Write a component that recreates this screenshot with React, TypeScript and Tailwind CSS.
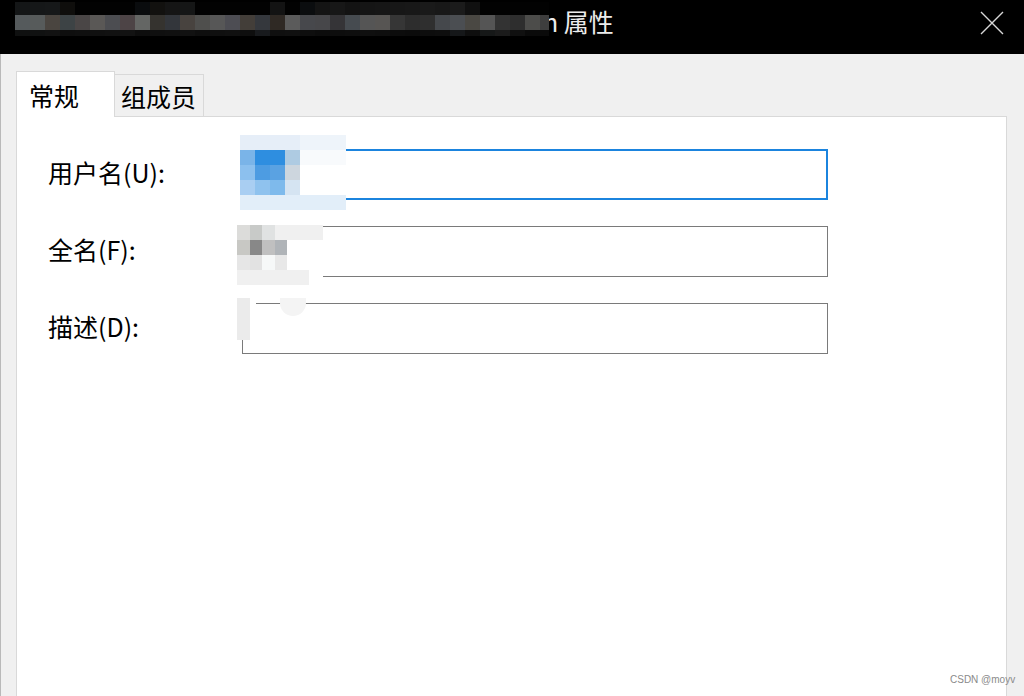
import React from "react";

const titleMid = [
  "#555a5c", "#575b5b", "#4a4540", "#3d4345", "#4a4646", "#5a5856", "#4c4d51", "#4d4446", "#646664", "#35332f",
  "#33363b", "#48433f", "#4f4f4d", "#575757", "#4d4d53", "#433e39", "#35383d", "#2f2924", "#5b5b5b", "#47484c",
  "#47474a", "#353437", "#464b50", "#555555", "#575553", "#363636", "#2d2d2d", "#2f2f2f", "#45484c", "#4b4e52",
  "#4a4843", "#555555", "#333333", "#2e2e2e", "#4c4c4a", "#3e3e3e",
];
const titleTop = [
  "#141617", "#151718", "#161819", "#0f0e0c", "#020202", "#020202", "#020202", "#020202", "#0a0c0e", "#12110f",
  "#151515", "#151616", "#020202", "#020202", "#020202", "#020202", "#020202", "#131313", "#020202", "#0b0d0f",
  "#141414", "#171717", "#131313", "#151515", "#161616", "#171717", "#181818", "#1a1a1a", "#181818", "#1b1b1b",
  "#101010", "#020202", "#020202", "#020202", "#020202", "#020202",
];
const titleBot = [
  "#0f1010", "#101111", "#121212", "#0e0e0e", "#0f0f0f", "#101010", "#111111", "#121212", "#0d0d0d", "#0f0f0f",
  "#101010", "#111111", "#0e0e0e", "#0f0f0f", "#101010", "#0e0e0e", "#181a1d", "#0f0f0f", "#101010", "#0e0e0e",
  "#0c0c0c", "#0d0d0d", "#0e0e0e", "#0f0f0f", "#0e0e0e", "#0c0c0c", "#0b0b0b", "#0d0d0d", "#0e0e0e", "#151719",
  "#0e0e0e", "#161818", "#1b1b1b", "#101010", "#0a0a0a", "#0a0a0a",
];
const titleW = [...Array(35).fill(15), 9];

function Row({ colors, w, h }: { colors: string[]; w: number[] | number; h: number }) {
  return (
    <div className="flex">
      {colors.map((c, i) => (
        <div
          key={i}
          style={{ backgroundColor: c, width: Array.isArray(w) ? w[i] : w, height: h }}
        />
      ))}
    </div>
  );
}

function Field({ focus }: { focus: boolean }) {
  if (focus) {
    return <div className="w-[586px] h-[51px] bg-white border-2 border-solid border-[#1b84de]" />;
  }
  return <div className="w-[586px] h-[51px] bg-white border border-solid border-[#7a7a7a]" />;
}

export default function App() {
  return (
    <div
      className="relative w-[1024px] h-[696px] overflow-hidden bg-[#f0f0f0] flex flex-col"
      style={{ fontFamily: '"Noto Sans CJK SC", "Microsoft YaHei", sans-serif' }}
    >
      {/* Title bar */}
      <header className="relative h-[54px] bg-black flex items-start shrink-0">
        <div className="ml-[15px] mt-[2px] flex flex-col z-10">
          <Row colors={titleTop} w={titleW} h={13} />
          <Row colors={titleMid} w={titleW} h={15} />
          <Row colors={titleBot} w={titleW} h={6} />
        </div>
        <span className="ml-[-6px] mt-[9px] text-[25px] leading-none text-[#ececec]">
          n 属性
        </span>
        <svg
          className="absolute left-[980px] top-[11px]"
          width="24"
          height="24"
          viewBox="0 0 24 24"
        >
          <path d="M1 1 L23 23 M23 1 L1 23" stroke="#d8d8d8" strokeWidth="1.4" fill="none" />
        </svg>
      </header>

      {/* Body */}
      <div className="flex-1 flex flex-col border-l border-[#b9b9b9] pl-[15px] pr-[17px] pt-[17px]">
        {/* Tabs */}
        <div className="relative z-10 flex items-end h-[46px] -mb-px">
          <div className="w-[99px] h-[46px] bg-white border border-b-0 border-[#d9d9d9] pl-[12px] flex items-center">
            <span className="text-[25px] leading-none text-black mt-[2px]">常规</span>
          </div>
          <div className="w-[89px] h-[42px] mb-px bg-[#f0f0f0] border-t border-r border-[#d9d9d9] pl-[6px] flex items-center">
            <span className="text-[25px] leading-none text-black mt-[2px]">组成员</span>
          </div>
        </div>

        {/* Panel */}
        <div className="flex-1 bg-white border border-b-0 border-[#d9d9d9] pt-[32px] pl-[31px] flex flex-col gap-[26px]">
          {[
            { label: "用户名(U):", focus: true },
            { label: "全名(F):", focus: false },
            { label: "描述(D):", focus: false },
          ].map((r) => (
            <div key={r.label} className="flex items-center h-[51px]">
              <div className="w-[194px] text-[25px] leading-none text-black mt-[-5px]">{r.label}</div>
              <Field focus={r.focus} />
            </div>
          ))}
        </div>
      </div>

      {/* Mosaic overlays on inputs */}
      <div className="absolute left-[240px] top-[135px] flex flex-col">
        <Row colors={["#e6eef8", "#e6eef8", "#e6eef8", "#e6eef8", "#eef4fa"]} w={[15, 15, 15, 15, 46]} h={15} />
        <Row colors={["#7ab4e8", "#2e8ee0", "#2e8ee0", "#aecbe2", "#f8fafc"]} w={[15, 15, 15, 15, 46]} h={15} />
        <Row colors={["#8cc0ee", "#4d9ce2", "#5aa2e2", "#cdd6de", "#ffffff"]} w={[15, 15, 15, 15, 46]} h={15} />
        <Row colors={["#a9cef2", "#8fc2ee", "#7ebaec", "#d5e4f2", "#ffffff"]} w={[15, 15, 15, 15, 46]} h={15} />
        <Row colors={["#e2eef9"]} w={[106]} h={15} />
      </div>
      <div className="absolute left-[237px] top-[225px] flex flex-col">
        <Row colors={["#dcdcda", "#c8cac8", "#e0e2e2", "#f0f0f0", "#f0f0f0"]} w={[13, 12, 13, 12, 36]} h={15} />
        <Row colors={["#c8c8c4", "#888888", "#c0c0c0", "#b0b4b8", "#ffffff"]} w={[13, 12, 13, 12, 36]} h={15} />
        <Row colors={["#e6e6e6", "#e2e2e2", "#f6f8f8", "#e8e8e8", "#ffffff"]} w={[13, 12, 13, 12, 36]} h={15} />
        <Row colors={["#f0f0f0", "#ffffff"]} w={[72, 14]} h={15} />
      </div>
      <div className="absolute left-[237px] top-[298px] w-[13px] h-[42px] bg-[#ebebeb]" />
      <div className="absolute left-[250px] top-[298px] w-[6px] h-[12px] bg-white" />
      <div className="absolute left-[280px] top-[298px] w-[26px] h-[18px] bg-[#f4f4f4] rounded-b-full" />

      {/* Watermark */}
      <div
        className="absolute left-[950px] top-[675px] text-[10px] leading-none text-[#8a8a8a]"
        style={{ fontFamily: '"Liberation Sans", Arial, sans-serif' }}
      >
        CSDN @moyv
      </div>
    </div>
  );
}
